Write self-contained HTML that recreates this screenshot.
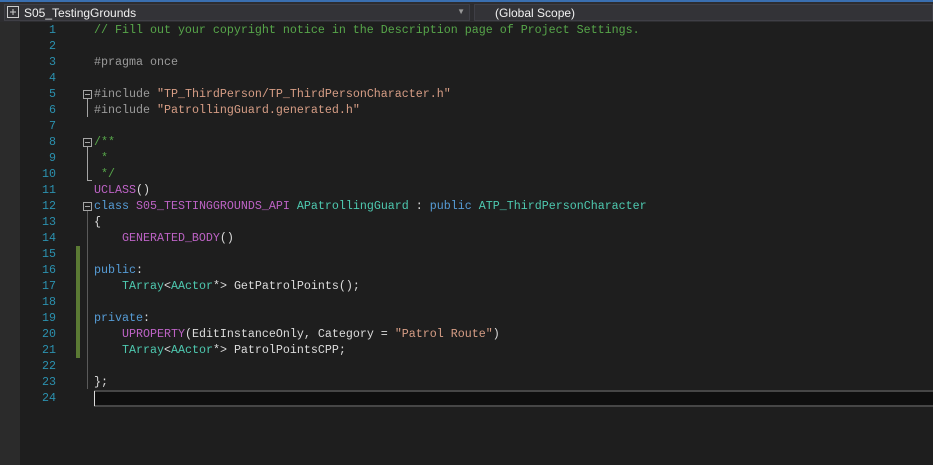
<!DOCTYPE html>
<html><head><style>
html,body{margin:0;padding:0;width:933px;height:465px;overflow:hidden;background:#1e1e1e;}
.top{position:absolute;left:0;top:0;width:933px;height:22px;background:#2d2d30;border-top:2px solid #3a6fb0;box-sizing:border-box;font-family:"Liberation Sans",sans-serif;font-size:12px;color:#f1f1f1;}
.dd1{position:absolute;left:4px;top:2px;width:466px;height:17px;background:#333337;border:1px solid #3f3f46;box-sizing:border-box}
.dd2{position:absolute;left:474px;top:2px;width:459px;height:17px;background:#333337;border:1px solid #3f3f46;box-sizing:border-box}
.gut{position:absolute;left:0;top:22px;width:20px;height:443px;background:#2b2b2b}
.code{position:absolute;left:0;top:22px;font-family:"Liberation Mono",monospace;font-size:11.67px;color:#dcdcdc}
.l{position:absolute;height:16px;line-height:16px;white-space:pre}
.n{position:absolute;width:56px;text-align:right;color:#2b91af;font-family:"Liberation Mono",monospace;font-size:11.67px;height:16px;line-height:16px}
.c{color:#57a64a}.p{color:#9b9b9b}.s{color:#d69d85}.k{color:#569cd6}.m{color:#bd63c5}.t{color:#4ec9b0}
.fb{position:absolute;width:7px;height:7px;border:1px solid #a5a5a5;left:83px}
.fb:after{content:"";position:absolute;left:1px;top:3px;width:5px;height:1px;background:#a5a5a5}
.vl{position:absolute;width:1px;background:#a5a5a5;left:87px}
</style></head><body>
<div class="top">
<div class="dd1"><svg style="position:absolute;left:2px;top:1px" width="12" height="12"><rect x="0.5" y="0.5" width="11" height="11" fill="none" stroke="#ccc"/><path d="M3 6h6M6 3v6" stroke="#ccc"/></svg><span style="position:absolute;left:19px;top:1px">S05_TestingGrounds</span><span style="position:absolute;right:4px;top:2px;font-size:8px;color:#999">▼</span></div>
<div class="dd2"><span style="position:absolute;left:20px;top:1px">(Global Scope)</span></div>
</div>
<div class="gut"></div>
<div style="position:absolute;left:76px;top:246px;width:4px;height:112px;background:#5b7a34"></div>
<div style="position:absolute;left:94px;top:390px;width:839px;height:17px;background:#0f0f0f;border-top:2px solid #464646;border-bottom:2px solid #464646;box-sizing:border-box"></div>
<div style="position:absolute;left:94px;top:391px;width:1px;height:15px;background:#dcdcdc"></div>
<div class="fb" style="top:90px"></div><div class="vl" style="top:99px;height:18px"></div>
<div class="fb" style="top:138px"></div><div class="vl" style="top:147px;height:34px"></div><div style="position:absolute;left:87px;top:180px;width:5px;height:1px;background:#a5a5a5"></div>
<div class="fb" style="top:202px"></div><div class="vl" style="top:211px;height:178px;background:#5a5a5a"></div>
<div class="code">
<div class="n" style="top:0">1</div><div class="n" style="top:16px">2</div><div class="n" style="top:32px">3</div><div class="n" style="top:48px">4</div><div class="n" style="top:64px">5</div><div class="n" style="top:80px">6</div><div class="n" style="top:96px">7</div><div class="n" style="top:112px">8</div><div class="n" style="top:128px">9</div><div class="n" style="top:144px">10</div><div class="n" style="top:160px">11</div><div class="n" style="top:176px">12</div><div class="n" style="top:192px">13</div><div class="n" style="top:208px">14</div><div class="n" style="top:224px">15</div><div class="n" style="top:240px">16</div><div class="n" style="top:256px">17</div><div class="n" style="top:272px">18</div><div class="n" style="top:288px">19</div><div class="n" style="top:304px">20</div><div class="n" style="top:320px">21</div><div class="n" style="top:336px">22</div><div class="n" style="top:352px">23</div><div class="n" style="top:368px">24</div>
<div class="l c" style="top:0;left:94px">// Fill out your copyright notice in the Description page of Project Settings.</div>
<div class="l p" style="top:32px;left:94px">#pragma once</div>
<div class="l" style="top:64px;left:94px"><span class="p">#include </span><span class="s">"TP_ThirdPerson/TP_ThirdPersonCharacter.h"</span></div>
<div class="l" style="top:80px;left:94px"><span class="p">#include </span><span class="s">"PatrollingGuard.generated.h"</span></div>
<div class="l c" style="top:112px;left:94px">/**</div>
<div class="l c" style="top:128px;left:94px"> *</div>
<div class="l c" style="top:144px;left:94px"> */</div>
<div class="l m" style="top:160px;left:94px">UCLASS<span style="color:#dcdcdc">()</span></div>
<div class="l" style="top:176px;left:94px"><span class="k">class</span> <span class="m">S05_TESTINGGROUNDS_API</span> <span class="t">APatrollingGuard</span> : <span class="k">public</span> <span class="t">ATP_ThirdPersonCharacter</span></div>
<div class="l" style="top:192px;left:94px">{</div>
<div class="l" style="top:208px;left:94px">    <span class="m">GENERATED_BODY</span>()</div>
<div class="l" style="top:240px;left:94px"><span class="k">public</span>:</div>
<div class="l" style="top:256px;left:94px">    <span class="t">TArray</span>&lt;<span class="t">AActor</span>*&gt; GetPatrolPoints();</div>
<div class="l" style="top:288px;left:94px"><span class="k">private</span>:</div>
<div class="l" style="top:304px;left:94px">    <span class="m">UPROPERTY</span>(EditInstanceOnly, Category = <span class="s">"Patrol Route"</span>)</div>
<div class="l" style="top:320px;left:94px">    <span class="t">TArray</span>&lt;<span class="t">AActor</span>*&gt; PatrolPointsCPP;</div>
<div class="l" style="top:352px;left:94px">};</div>
</div>
</body></html>
